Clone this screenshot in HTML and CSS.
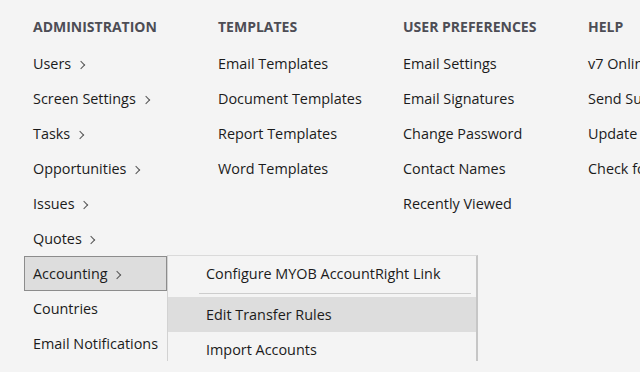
FILE: index.html
```html
<!DOCTYPE html>
<html lang="en">
<head>
    <meta charset="UTF-8">
    <title>Settings Menu</title>
    <link rel="stylesheet" href="styles.css">
</head>
<body>
    <div class="menu">
        <div class="menu-col">
            <h2 class="menu-title">ADMINISTRATION</h2>
            <ul class="menu-list menu-list-admin">
                <li class="menu-item">Users <span class="chevron"></span></li>
                <li class="menu-item">Screen Settings <span class="chevron"></span></li>
                <li class="menu-item">Tasks <span class="chevron"></span></li>
                <li class="menu-item">Opportunities <span class="chevron"></span></li>
                <li class="menu-item">Issues <span class="chevron"></span></li>
                <li class="menu-item">Quotes <span class="chevron"></span></li>
                <li class="menu-item is-open">Accounting <span class="chevron"></span>
                    <ul class="submenu">
                        <li class="submenu-item">Configure MYOB AccountRight Link</li>
                        <li class="submenu-sep"></li>
                        <li class="submenu-item is-hover">Edit Transfer Rules</li>
                        <li class="submenu-item">Import Accounts</li>
                    </ul>
                </li>
                <li class="menu-item">Countries</li>
                <li class="menu-item">Email Notifications</li>
            </ul>
        </div>
        <div class="menu-col">
            <h2 class="menu-title">TEMPLATES</h2>
            <ul class="menu-list">
                <li class="menu-item">Email Templates</li>
                <li class="menu-item">Document Templates</li>
                <li class="menu-item">Report Templates</li>
                <li class="menu-item">Word Templates</li>
            </ul>
        </div>
        <div class="menu-col">
            <h2 class="menu-title">USER PREFERENCES</h2>
            <ul class="menu-list">
                <li class="menu-item">Email Settings</li>
                <li class="menu-item">Email Signatures</li>
                <li class="menu-item">Change Password</li>
                <li class="menu-item">Contact Names</li>
                <li class="menu-item">Recently Viewed</li>
            </ul>
        </div>
        <div class="menu-col">
            <h2 class="menu-title">HELP</h2>
            <ul class="menu-list">
                <li class="menu-item">v7 Online Help</li>
                <li class="menu-item">Send Support Request</li>
                <li class="menu-item">Update Licence</li>
                <li class="menu-item">Check for Updates</li>
            </ul>
        </div>
    </div>
</body>
</html>
```

FILE: styles.css
```css
* {
    margin: 0;
    padding: 0;
    box-sizing: border-box;
}

body {
    background: #f4f4f4;
    font-family: 'Open Sans', 'Noto Sans', sans-serif;
    color: #1b1b1b;
    overflow: hidden;
}

.menu {
    display: flex;
    padding: 17px 0 0 24px;
    width: 900px;
}

.menu-col {
    width: 185px;
    flex-shrink: 0;
}

.menu-title {
    font-size: 14px;
    font-weight: 700;
    color: #4d4d55;
    line-height: 20px;
    padding-left: 9px;
    margin-bottom: 9px;
    white-space: nowrap;
}

.menu-list {
    list-style: none;
}

.menu-list-admin {
    width: 143px;
}

.menu-item {
    position: relative;
    font-size: 14.4px;
    line-height: 33px;
    padding: 0 8px;
    border: 1px solid transparent;
    white-space: nowrap;
}

.menu-item.is-open {
    background: #dddddd;
    border-color: #8c8c8c;
}

.chevron {
    display: inline-block;
    width: 6px;
    height: 6px;
    border-top: 1.5px solid #555;
    border-right: 1.5px solid #555;
    transform: rotate(45deg);
    margin-left: 3px;
    vertical-align: 1px;
}

/* выпадающее подменю */
.submenu {
    position: absolute;
    left: 142px;
    top: -2px;
    width: 311px;
    height: 130px;
    list-style: none;
    background: #f4f4f4;
    border-top: 1px solid #dadada;
    border-left: 1px solid #d2d2d2;
    border-right: 2px solid #c6c6c6;
    z-index: 5;
}

.submenu-item {
    line-height: 35px;
    padding-left: 38px;
}

.submenu-item.is-hover {
    background: #dddddd;
}

.submenu-sep {
    height: 1px;
    background: #cdcdcd;
    margin: 2px 5px 3px 31px;
}
```
